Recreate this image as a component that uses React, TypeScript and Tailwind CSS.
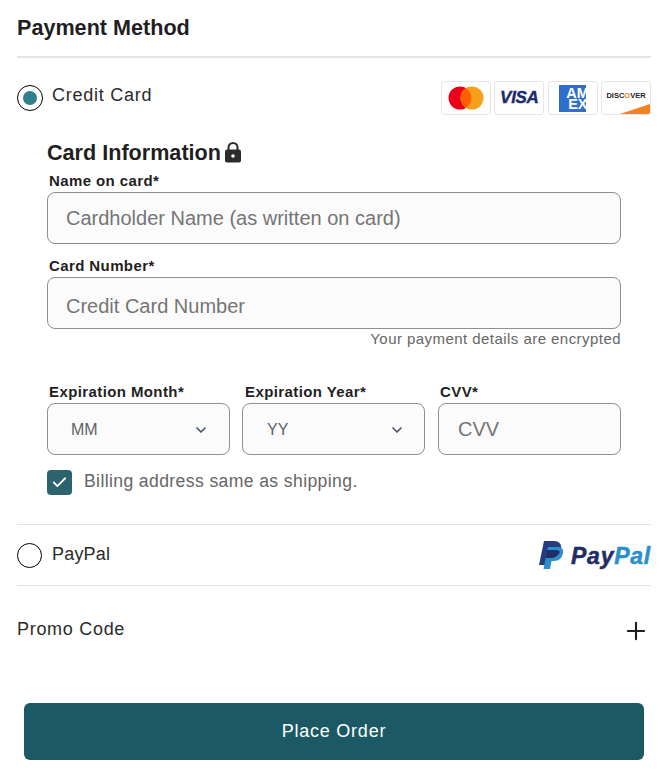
import React from 'react';
import { ChevronDown, Check, Plus } from 'lucide-react';

const font = "font-['Liberation_Sans',Arial,sans-serif]";

const CardBadge: React.FC<{ children: React.ReactNode }> = ({ children }) => (
  <div className="relative w-[50px] h-[34px] bg-white border border-[#e6e6e6] rounded-[3px] overflow-hidden flex items-center justify-center">
    {children}
  </div>
);

const FieldLabel: React.FC<{ children: React.ReactNode }> = ({ children }) => (
  <label className="block pl-[2px] text-[15px] leading-[18px] font-bold tracking-[0.4px] text-[#1f1f1f]">{children}</label>
);

const TextField: React.FC<{ placeholder: string; className?: string }> = ({ placeholder, className }) => (
  <div className={`h-[52px] bg-[#fbfbfb] border border-[#8f8f8f] rounded-[8px] pl-[18px] flex items-center text-[20px] text-[#757575] ${className ?? ''}`}>
    {placeholder}
  </div>
);

const SelectField: React.FC<{ value: string; className?: string }> = ({ value, className }) => (
  <div className={`h-[52px] pt-[2px] bg-[#fbfbfb] border border-[#8f8f8f] rounded-[8px] flex items-center justify-between text-[16px] text-[#5f6368] ${className ?? ''}`}>
    <span>{value}</span>
    <ChevronDown className="w-[16px] h-[16px] text-[#4b5563]" strokeWidth={2.5} />
  </div>
);

const LockIcon = () => (
  <svg width="18" height="21" viewBox="0 0 18 21" className="ml-[3px] mt-[-1px]">
    <path d="M4.500 8V5.500a4.500 4.500 0 0 1 9 0V8" fill="none" stroke="#2b2b2b" strokeWidth="2" />
    <rect x="1" y="7.500" width="16" height="13" rx="2" fill="#2b2b2b" />
    <circle cx="9" cy="14" r="1.800" fill="#ffffff" />
  </svg>
);

const PayPalLogo = () => (
  <div className="flex items-center">
    <svg width="24" height="28" viewBox="0 0 24 28" className="mr-[8px] mt-[-1px]">
      <path d="M5 0h10c5 0 8 3 7 8-1 6-5 9-10 9H8l-1.500 7H0z" fill="#253b80" />
      <path d="M9 6h10c4 0 5.500 2 5 6-1 5-4 8-9 8h-2.500L11 28H4.500l1-5 3-15z" fill="#2a8fcb" />
      <path d="M8.300 9 6.500 17h5.500c3.500 0 7-2 9-6-1-1.500-2.500-2-4.500-2z" fill="#222d65" />
    </svg>
    <span className="text-[23px] leading-[28px] font-bold italic tracking-[0.75px] [-webkit-text-stroke:0.5px_#222d65] text-[#222d65] mt-[1px]">
      Pay<span className="text-[#2a8fcb] [-webkit-text-stroke:0.5px_#2a8fcb]">Pal</span>
    </span>
  </div>
);

export default function App() {
  return (
    <div className={`w-[668px] h-[778px] bg-white px-[17px] overflow-hidden ${font}`}>
      <h2 className="h-[58px] pt-[15px] border-b-2 border-[#e5e5e5] text-[21.600px] leading-[26px] font-bold text-[#1f1f1f]">
        Payment Method
      </h2>

      {/* credit card */}
      <div className="flex justify-between mt-[23px]">
        <div className="flex items-start">
          <div className="mt-[4px] w-[26px] h-[26px] rounded-full border-[1.500px] border-black flex items-center justify-center">
            <div className="w-[14px] h-[14px] rounded-full bg-[#2f7f8c]" />
          </div>
          <span className="ml-[9px] text-[18px] leading-[28px] tracking-[0.75px] text-[#2b2b2b]">Credit Card</span>
        </div>
        <div className="flex gap-[3.330px]">
          <CardBadge>
            <svg width="38" height="24" viewBox="0 0 38 24">
              <circle cx="13" cy="12" r="11.500" fill="#eb001b" />
              <circle cx="25" cy="12" r="11.500" fill="#f9a01b" />
              <path d="M19 2.200a11.500 11.500 0 0 1 0 19.600a11.500 11.500 0 0 1 0-19.600z" fill="#ff5f00" />
            </svg>
          </CardBadge>
          <CardBadge>
            <span className="text-[17px] font-bold italic tracking-[-0.3px] [-webkit-text-stroke:0.4px_#1a2a6c] text-[#1a2a6c]">VISA</span>
          </CardBadge>
          <CardBadge>
            <div className="w-[27px] h-[27px] bg-[#2f6fcb] overflow-hidden">
              <div className="w-[40px] pl-[7px] pt-[3px] text-white text-[14.500px] leading-[11px] font-bold">
                <div>AM</div>
                <div className="pl-[2px]">EX</div>
              </div>
            </div>
          </CardBadge>
          <CardBadge>
            <span className="relative text-[7.500px] font-bold text-[#222222] mt-[-4px]">
              DISC<span className="text-[#f58220]">O</span>VER
            </span>
            <div className="absolute right-0 bottom-0 w-[30px] h-[10px] bg-[#f58220] [clip-path:polygon(100%_0,100%_100%,0_100%)]" />
          </CardBadge>
        </div>
      </div>

      <div className="ml-[30px] w-[574px]">
        <div className="flex items-center mt-[23px]">
          <h3 className="text-[21.600px] leading-[30px] font-bold text-[#1f1f1f]">Card Information</h3>
          <LockIcon />
        </div>

        <div className="mt-[4px]">
          <FieldLabel>Name on card*</FieldLabel>
          <TextField placeholder="Cardholder Name (as written on card)" className="mt-[2px]" />
        </div>

        <div className="mt-[13px]">
          <FieldLabel>Card Number*</FieldLabel>
          <TextField placeholder="Credit Card Number" className="mt-[2px] pt-[5px]" />
          <p className="text-right text-[15px] leading-[20px] tracking-[0.45px] text-[#666666]">Your payment details are encrypted</p>
        </div>

        <div className="flex gap-x-[12px] mt-[34px]">
          <div className="w-[183px]">
            <FieldLabel>Expiration Month*</FieldLabel>
            <div className="mt-[2px]"><SelectField value="MM" className="pl-[23px] pr-[20px]" /></div>
          </div>
          <div className="w-[183px]">
            <div className="pl-[1px]"><FieldLabel>Expiration Year*</FieldLabel></div>
            <div className="mt-[2px]"><SelectField value="YY" className="pl-[24px] pr-[19px]" /></div>
          </div>
          <div className="w-[183px] ml-[1px]">
            <FieldLabel>CVV*</FieldLabel>
            <TextField placeholder="CVV" className="mt-[2px] pl-[19px]" />
          </div>
        </div>

        <div className="flex items-center mt-[15px]">
          <div className="w-[25px] h-[25px] rounded-[4px] bg-[#2b646e] flex items-center justify-center">
            <Check className="w-[17px] h-[17px] text-white" strokeWidth={2.5} />
          </div>
          <span className="ml-[12px] text-[17.600px] tracking-[0.38px] text-[#666666] mt-[-3px]">Billing address same as shipping.</span>
        </div>
      </div>

      {/* paypal */}
      <div className="mt-[29px] h-[62px] border-t border-b border-[#e5e5e5] flex items-center justify-between">
        <div className="flex items-center">
          <div className="w-[25px] h-[25px] rounded-full border-[1.500px] border-black" />
          <span className="ml-[10px] text-[18px] tracking-[0.2px] text-[#2b2b2b] mt-[-1px]">PayPal</span>
        </div>
        <PayPalLogo />
      </div>

      {/* promo */}
      <div className="flex items-center justify-between h-[88px]">
        <span className="text-[18px] tracking-[0.7px] text-[#2b2b2b] mt-[-2px]">Promo Code</span>
        <Plus className="w-[28px] h-[28px] mr-[1px] mt-[2px] text-[#1f1f1f]" strokeWidth={1.800} />
      </div>

      <button className="block w-[620px] h-[57px] mt-[29px] ml-[7px] rounded-[6px] bg-[#1b5a64] text-white text-[18px] tracking-[0.75px]">
        Place Order
      </button>
    </div>
  );
}
